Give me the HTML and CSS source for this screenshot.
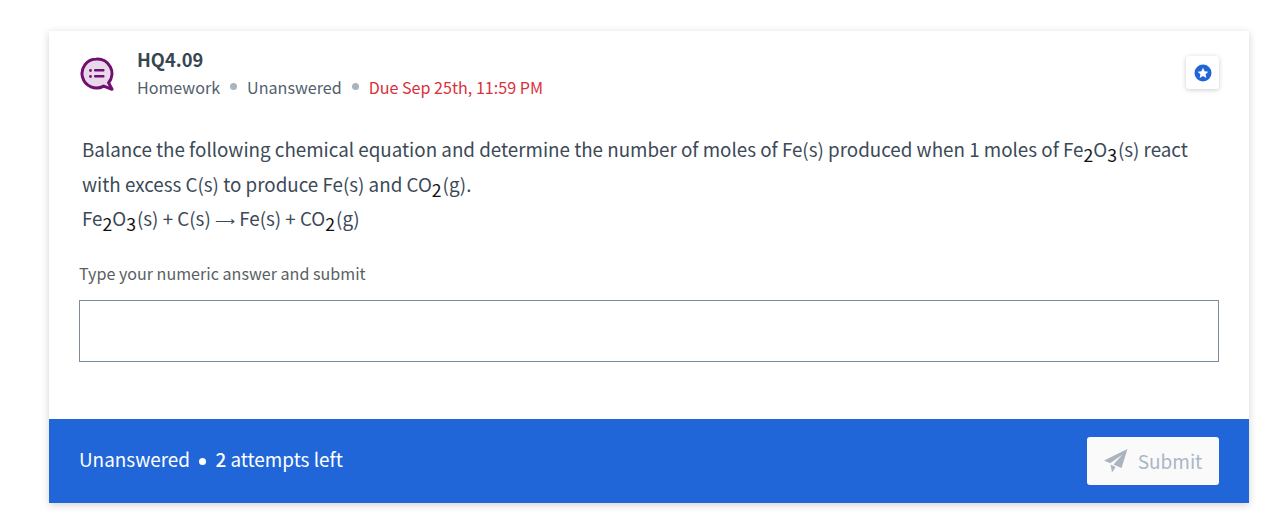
FILE: index.html
```html
<!DOCTYPE html>
<html lang="en">
<head>
    <meta charset="UTF-8">
    <title>HQ4.09</title>
    <link rel="stylesheet" href="styles.css">
</head>
<body>
    <div class="card">
        <div class="card-head">
            <svg class="type-icon" width="34" height="34" viewBox="0 0 34 34">
                <path d="M16.5 2a14.5 14.5 0 1 0 7.2 27.1l8.3 3.2-3.4-6.6A14.5 14.5 0 0 0 16.5 2z" fill="#e8d8ea" stroke="#6f0f6f" stroke-width="3" stroke-linejoin="round"/>
                <circle cx="10.5" cy="13.5" r="1.4" fill="#6f0f6f"/>
                <circle cx="10.5" cy="19.5" r="1.4" fill="#6f0f6f"/>
                <rect x="14" y="12" width="10.5" height="2.6" rx="1" fill="#6f0f6f"/>
                <rect x="14" y="18" width="10.5" height="2.6" rx="1" fill="#6f0f6f"/>
            </svg>
            <div class="head-text">
                <div class="title">HQ4.09</div>
                <div class="meta">
                    <span>Homework</span>
                    <i class="dot"></i>
                    <span>Unanswered</span>
                    <i class="dot"></i>
                    <span class="due">Due Sep 25th, 11:59 PM</span>
                </div>
            </div>
            <button class="star-btn" aria-label="Star">
                <svg width="18" height="18" viewBox="0 0 18 18">
                    <circle cx="9" cy="9" r="8.5" fill="#2066d9"/>
                    <path d="M9 3.8l1.6 3.4 3.7.5-2.7 2.5.7 3.7L9 12.1l-3.3 1.8.7-3.7-2.7-2.5 3.7-.5z" fill="#fff"/>
                </svg>
            </button>
        </div>

        <div class="question">
            <p>Balance the following chemical equation and determine the number of moles of Fe(s) produced when 1 moles of Fe<sub>2</sub>O<sub class="last">3</sub>(s) react with excess C(s) to produce Fe(s) and CO<sub class="last">2</sub>(g).</p>
            <p>Fe<sub>2</sub>O<sub class="last">3</sub>(s) + C(s) <span class="arrow">⟶</span> Fe(s) + CO<sub class="last">2</sub>(g)</p>
        </div>

        <label class="answer-label" for="answer">Type your numeric answer and submit</label>
        <input class="answer" id="answer" type="text">

        <div class="card-foot">
            <div class="status">Unanswered <i class="foot-dot"></i> <b>2</b> attempts left</div>
            <button class="submit" disabled>
                <svg width="24" height="24" viewBox="0 0 24 24">
                    <path d="M23.5 0L0 11.5l6.2 2.8L18.5 5.5 9.5 15.6l8 3.4z" fill="#a9b4bf"/>
                    <path d="M6.5 15.6L8 23.5l3.6-5.6z" fill="#a9b4bf"/>
                </svg>
                Submit
            </button>
        </div>
    </div>
</body>
</html>
```

FILE: styles.css
```css
* {
    box-sizing: border-box;
}
body {
    margin: 0;
    padding: 31px 22px 26px 49px;
    background-color: #fff;
    font-family: "Noto Sans CJK JP", "Open Sans", sans-serif;
    color: #3c4a57;
}
.card {
    width: 1200px;
    background-color: #fff;
    box-shadow: 0 2px 8px rgba(0, 0, 0, 0.18);
}
.card-head {
    display: flex;
    align-items: flex-start;
    padding: 15px 30px 0 31px;
    height: 92px;
}
.type-icon {
    margin-top: 11px;
    margin-right: 23px;
    flex-shrink: 0;
}
.head-text {
    flex: 1;
}
.title {
    font-size: 18.3px;
    font-weight: 600;
    line-height: 26px;
    color: #37474f;
}
.meta {
    display: flex;
    align-items: center;
    gap: 10px;
    margin-top: 3px;
    font-size: 16.1px;
    line-height: 24px;
    color: #52606d;
}
.dot {
    width: 7px;
    height: 7px;
    margin-top: -2px;
    border-radius: 50%;
    background-color: #a9b4bf;
}
.due {
    color: #d9303a;
}
.star-btn {
    width: 33px;
    height: 33px;
    margin-top: 10px;
    padding: 0;
    border: none;
    border-radius: 3px;
    background-color: #fff;
    box-shadow: 0 1px 5px rgba(0, 0, 0, 0.2);
    display: flex;
    align-items: center;
    justify-content: center;
}
.question {
    padding: 9px 50px 0 33px;
    font-size: 18.8px;
    line-height: 34.5px;
    color: #3c4a57;
}
.question p {
    margin: 0;
}
.question sub {
    font-size: 17.6px;
    line-height: 0;
    vertical-align: -5px;
    color: #111;
}
.question sub.last {
    margin-right: 1px;
}
.arrow {
    font-size: 14px;
    line-height: 0;
}
.answer-label {
    display: block;
    margin: 25px 0 0 30px;
    font-size: 16.1px;
    line-height: 24px;
    color: #5a5f63;
}
.answer {
    display: block;
    width: 1140px;
    height: 62px;
    margin: 15px 0 0 30px;
    border: 1px solid #7d8c99;
    background-color: #fff;
}
.card-foot {
    display: flex;
    align-items: center;
    justify-content: space-between;
    height: 84px;
    margin-top: 57px;
    padding: 0 30px;
    background-color: #2066d9;
}
.status {
    margin-bottom: 5px;
    font-size: 18.9px;
    color: #fff;
}
.status b {
    font-weight: 500;
}
.foot-dot {
    display: inline-block;
    width: 7px;
    height: 7px;
    margin: 0 5px;
    border-radius: 50%;
    background-color: #fff;
    vertical-align: 2px;
}
.submit {
    display: flex;
    align-items: center;
    justify-content: center;
    gap: 10px;
    width: 132px;
    height: 48px;
    border: none;
    border-radius: 3px;
    background-color: #fafafa;
    font-family: inherit;
    font-size: 19px;
    color: #a9b7c6;
}
```
